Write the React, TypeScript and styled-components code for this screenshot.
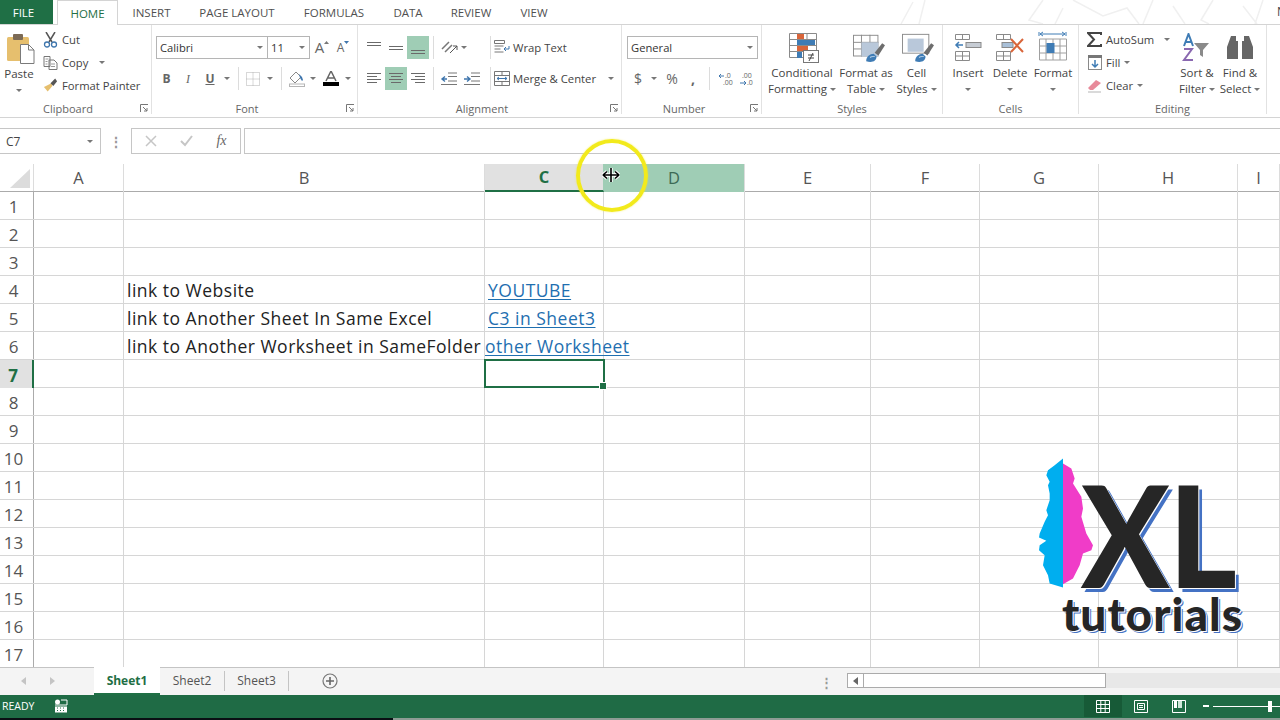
import styled, { createGlobalStyle } from "styled-components";

const GlobalStyle = createGlobalStyle`
	html, body {
		margin: 0;
		padding: 0;
		background: #fff;
		overflow: hidden;
	}
	* {
		box-sizing: border-box;
	}
`;

const Page = styled.div`
	position: relative;
	width: 1280px;
	height: 720px;
	overflow: hidden;
	background: #fff;
	display: flex;
	flex-direction: column;
	font-family: "Open Sans", "Noto Sans", sans-serif;
	color: #444;
`;

const TabBar = styled.div`
	display: flex;
	height: 25px;
	border-bottom: 1px solid #d4d4d4;
	flex: none;
`;

const FileTab = styled.div`
	width: 53px;
	height: 24px;
	background: #1f6f45;
	color: #fff;
	font-size: 11.5px;
	display: flex;
	align-items: center;
	justify-content: center;
	margin-right: 4px;
	padding-right: 6px;
`;

const Tab = styled.div<{ $w: number; $active?: boolean }>`
	width: ${(p) => p.$w}px;
	height: ${(p) => (p.$active ? 25 : 24)}px;
	display: flex;
	align-items: center;
	justify-content: center;
	font-size: 11.5px;
	background: #fff;
	color: ${(p) => (p.$active ? "#1f6f45" : "#505050")};
	border: ${(p) => (p.$active ? "1px solid #d4d4d4" : "none")};
	border-bottom: none;
	flex: none;
	white-space: nowrap;
`;

const Doodle = styled.svg`
	flex: 1;
	height: 24px;
`;

const SignIn = styled.div`
	width: 3px;
	overflow: hidden;
	font-size: 12px;
	line-height: 24px;
	color: #444;
`;

const Ribbon = styled.div`
	display: flex;
	height: 93px;
	flex: none;
	border-bottom: 1px solid #d4d4d4;
`;

const Group = styled.div<{ $w: number; $last?: boolean }>`
	width: ${(p) => p.$w}px;
	height: 89px;
	flex: none;
	display: flex;
	flex-direction: column;
	border-right: ${(p) => (p.$last ? "none" : "1px solid #e2e2e2")};
`;

const GroupBody = styled.div`
	height: 75px;
	display: flex;
	flex: none;
`;

const GroupFooter = styled.div`
	height: 17px;
	padding-top: 1px;
	display: flex;
	align-items: center;
	font-size: 11px;
	color: #666;
`;

const GroupLabel = styled.div`
	flex: 1;
	text-align: center;
`;

const Launcher = styled.svg`
	width: 9px;
	height: 9px;
	margin: 0 2px 0 4px;
`;

const PasteColumn = styled.div`
	width: 38px;
	margin-right: 5px;
	display: flex;
	flex-direction: column;
	align-items: center;
	padding-top: 8px;
	font-size: 11.5px;
	line-height: 16px;
	flex: none;
`;

const PasteIcon = styled.svg`
	margin-left: 4px;
`;

const SmallColumn = styled.div<{ $w: number; $pad?: number }>`
	width: ${(p) => p.$w}px;
	padding-left: ${(p) => p.$pad ?? 0}px;
	padding-top: 3px;
	display: flex;
	flex-direction: column;
	flex: none;
`;

const SmallButton = styled.div`
	height: 23px;
	display: flex;
	align-items: center;
	font-size: 11.25px;
	white-space: nowrap;
	gap: 4px;
`;

const IconBox = styled.span`
	width: 15px;
	height: 17px;
	flex: none;
	display: flex;
	align-items: center;
	justify-content: center;
`;

const Stack = styled.div<{ $pad: number }>`
	padding: 11px 0 0 ${(p) => p.$pad}px;
	display: flex;
	flex-direction: column;
	gap: 8px;
	flex: 1;
`;

const ToolRow = styled.div`
	height: 23px;
	display: flex;
	align-items: center;
`;

const Slot = styled.div<{ $w: number; $on?: boolean }>`
	width: ${(p) => p.$w}px;
	height: 23px;
	flex: none;
	display: flex;
	align-items: center;
	justify-content: center;
	font-size: 12px;
	background: ${(p) => (p.$on ? "#9fcdb5" : "transparent")};
`;

const Glyph = styled.span<{ $bold?: boolean; $italic?: boolean; $under?: boolean; $size?: number; $serif?: boolean }>`
	font-family: ${(p) => (p.$serif ? '"Liberation Serif", serif' : '"Open Sans", sans-serif')};
	font-size: ${(p) => p.$size ?? 12}px;
	font-weight: ${(p) => (p.$bold ? 700 : 400)};
	font-style: ${(p) => (p.$italic ? "italic" : "normal")};
	text-decoration: ${(p) => (p.$under ? "underline" : "none")};
	color: #666;
	line-height: 1;
`;

const VSep = styled.div`
	width: 1px;
	height: 23px;
	background: #dcdcdc;
`;

const Combo = styled.div<{ $w: number }>`
	width: ${(p) => p.$w}px;
	height: 23px;
	flex: none;
	border: 1px solid #b5b5b5;
	display: flex;
	align-items: center;
	justify-content: space-between;
	padding: 0 4px 0 3px;
	font-size: 11.2px;
	color: #333;
	& + & {
		border-left: 1px solid #b5b5b5;
		margin-left: -1px;
	}
`;

const Caret = styled.span<{ $gap?: number }>`
	display: inline-block;
	width: 0;
	height: 0;
	flex: none;
	margin-left: ${(p) => p.$gap ?? 0}px;
	border-left: 3px solid transparent;
	border-right: 3px solid transparent;
	border-top: 3px solid #777;
`;

const WideButton = styled.div`
	display: flex;
	align-items: center;
	gap: 3px;
	font-size: 11.3px;
	white-space: nowrap;
	height: 23px;
`;

const BigButton = styled.div<{ $w: number }>`
	width: ${(p) => p.$w}px;
	flex: none;
	padding-top: 8px;
	display: flex;
	flex-direction: column;
	align-items: center;
	font-size: 11.5px;
	line-height: 16px;
	white-space: nowrap;
`;

const BigIcon = styled.div<{ $shift?: number }>`
	height: 32px;
	margin-left: ${(p) => p.$shift ?? 0}px;
	display: flex;
	justify-content: center;
	align-items: flex-start;
`;

const CaretLine = styled.div`
	height: 16px;
	display: flex;
	align-items: center;
	justify-content: center;
	gap: 3px;
`;

const FormulaBar = styled.div`
	margin-top: 10px;
	height: 26px;
	display: flex;
	flex: none;
	font-size: 12px;
`;

const NameBox = styled.div`
	width: 101px;
	border: 1px solid #c6c6c6;
	border-left: none;
	display: flex;
	align-items: center;
	justify-content: space-between;
	padding: 0 7px 0 6px;
	color: #444;
`;

const Dots = styled.div`
	width: 30px;
	display: flex;
	align-items: center;
	justify-content: center;
	color: #999;
	font-size: 14px;
	font-weight: 700;
`;

const FnBox = styled.div`
	width: 110px;
	border: 1px solid #c6c6c6;
	display: flex;
	align-items: center;
	justify-content: space-around;
	padding: 0 2px;
`;

const FormulaInput = styled.div`
	flex: 1;
	margin-left: 3px;
	border: 1px solid #c6c6c6;
	border-right: none;
`;

const Sheet = styled.div`
	margin-top: 10px;
	flex: 1;
	display: flex;
	flex-direction: column;
	overflow: hidden;
	font-size: 17px;
`;

const HeaderRow = styled.div`
	height: 28px;
	flex: none;
	display: flex;
	border-bottom: 1px solid #ababab;
`;

const Corner = styled.div`
	width: 34px;
	flex: none;
	display: flex;
	align-items: flex-end;
	justify-content: flex-end;
	padding: 0 3px 3px 0;
	border-right: 1px solid #dcdcdc;
`;

const ColumnHead = styled.div<{ $w?: number; $state?: "selected" | "hover" }>`
	${(p) => (p.$w ? `width: ${p.$w}px; flex: none;` : "flex: 1;")}
	display: flex;
	align-items: center;
	justify-content: center;
	padding-bottom: 2px;
	font-size: 16.5px;
	border-right: 1px solid ${(p) => (p.$state === "selected" ? "#9fcdb5" : "#dcdcdc")};
	height: 28px;
	color: ${(p) => (p.$state === "selected" ? "#1f6f45" : p.$state === "hover" ? "#3c6a55" : "#555")};
	font-weight: ${(p) => (p.$state === "selected" ? 700 : 400)};
	background: ${(p) => (p.$state === "selected" ? "#e1e1e1" : p.$state === "hover" ? "#9fcdb5" : "transparent")};
	border-bottom: ${(p) => (p.$state === "selected" ? "2px solid #1f6f45" : "none")};
`;

const Row = styled.div`
	height: 28px;
	flex: none;
	display: flex;
	border-bottom: 1px solid #d6d6d6;
`;

const RowHead = styled.div<{ $selected?: boolean }>`
	width: 34px;
	flex: none;
	padding: 2px 6px 0 0;
	display: flex;
	align-items: center;
	justify-content: center;
	font-size: 17px;
	height: ${(p) => (p.$selected ? "28px" : "auto")};
	color: ${(p) => (p.$selected ? "#1f6f45" : "#555")};
	font-weight: ${(p) => (p.$selected ? 700 : 400)};
	background: ${(p) => (p.$selected ? "#e1e1e1" : "transparent")};
	border-right: ${(p) => (p.$selected ? "2px solid #1f6f45" : "1px solid #ababab")};
`;

const Cell = styled.div<{ $w?: number; $flush?: boolean }>`
	${(p) => (p.$w ? `width: ${p.$w}px; flex: none;` : "flex: 1;")}
	position: relative;
	border-right: 1px solid #d6d6d6;
	padding-left: ${(p) => (p.$flush ? 0 : 3)}px;
	display: flex;
	align-items: center;
	white-space: nowrap;
	color: #222;
	font-size: 17.5px;
	letter-spacing: 0.5px;
`;

const LinkText = styled.span`
	color: #1f6fb0;
	text-decoration: underline;
	text-underline-offset: 2px;
	text-decoration-thickness: 1px;
	position: relative;
	z-index: 1;
`;

const Selection = styled.div`
	position: absolute;
	left: -1px;
	top: -1px;
	width: 121px;
	height: 29px;
	border: 2px solid #1f6f45;
	z-index: 2;
	&::after {
		content: "";
		position: absolute;
		right: -4px;
		bottom: -4px;
		width: 6px;
		height: 6px;
		background: #1f6f45;
		border: 1px solid #fff;
	}
`;

const SheetTabs = styled.div`
	height: 28px;
	flex: none;
	display: flex;
	align-items: stretch;
	background: #f4f4f4;
	margin-top: -1px;
	border-top: 1px solid #c4c4c4;
	z-index: 3;
	font-size: 12px;
`;

const NavArrows = styled.div`
	width: 94px;
	display: flex;
	align-items: center;
	gap: 24px;
	padding: 0 0 2px 21px;
`;

const NavArrow = styled.span<{ $right?: boolean }>`
	width: 0;
	height: 0;
	border-top: 4px solid transparent;
	border-bottom: 4px solid transparent;
	${(p) => (p.$right ? "border-left: 5px solid #c4c4c4;" : "border-right: 5px solid #c4c4c4;")}
`;

const SheetTab = styled.div<{ $w: number; $active?: boolean }>`
	width: ${(p) => p.$w}px;
	margin-top: ${(p) => (p.$active ? -1 : 0)}px;
	padding-bottom: ${(p) => (p.$active ? 0 : 2)}px;
	display: flex;
	align-items: center;
	justify-content: center;
	background: ${(p) => (p.$active ? "#fff" : "transparent")};
	color: ${(p) => (p.$active ? "#1f6f45" : "#555")};
	font-weight: ${(p) => (p.$active ? 700 : 400)};
	border-bottom: ${(p) => (p.$active ? "2px solid #1f6f45" : "none")};
`;

const TabDivider = styled.div`
	width: 1px;
	height: 20px;
	margin-top: 3px;
	background: #c4c4c4;
`;

const AddSheet = styled.div`
	width: 82px;
	padding-bottom: 2px;
	display: flex;
	align-items: center;
	justify-content: center;
`;

const TabsGap = styled.div`
	width: 471px;
	display: flex;
	align-items: center;
	justify-content: flex-end;
	padding-right: 9px;
	color: #999;
	font-size: 13px;
	font-weight: 700;
`;

const ScrollTrack = styled.div`
	flex: 1;
	margin: 5px 0 7px 5px;
	background: #e8e8e8;
	display: flex;
	height: 15px;
`;

const ScrollArrow = styled.div`
	width: 16px;
	background: #fff;
	border: 1px solid #ababab;
	border-right: none;
	display: flex;
	align-items: center;
	justify-content: center;
`;

const ScrollThumb = styled.div`
	width: 243px;
	background: #fff;
	border: 1px solid #ababab;
`;

const StatusBar = styled.div`
	height: 23px;
	flex: none;
	background: #1f6b45;
	color: #fff;
	font-size: 10.5px;
	display: flex;
	align-items: center;
	padding: 0 0 1px 2px;
`;

const StatusIcon = styled.div`
	margin-left: 20px;
	display: flex;
	align-items: center;
`;

const ViewButtons = styled.div`
	margin-left: auto;
	height: 23px;
	display: flex;
	align-items: center;
`;

const ViewButton = styled.div<{ $on?: boolean }>`
	width: 38px;
	height: 22px;
	display: flex;
	align-items: center;
	justify-content: center;
	background: ${(p) => (p.$on ? "#175a37" : "transparent")};
`;

const ZoomSlider = styled.div`
	width: 86px;
	padding-left: 5px;
	margin-right: -4px;
	display: flex;
	align-items: center;
`;

const ZoomMinus = styled.div`
	width: 6px;
	height: 2px;
	background: #fff;
	margin-right: 4px;
`;

const ZoomLine = styled.div`
	flex: 1;
	height: 1px;
	background: #fff;
	display: flex;
	justify-content: flex-end;
	align-items: center;
	padding-right: 12px;
`;

const ZoomThumb = styled.div`
	width: 4px;
	height: 11px;
	background: #fff;
`;

const BottomEdge = styled.div`
	height: 2px;
	flex: none;
	background: linear-gradient(to right, #0a0f14 0, #0a0f14 393px, #8d9c94 393px, #8d9c94 100%);
`;

const Spotlight = styled.div`
	position: absolute;
	left: 576px;
	top: 139px;
	width: 72px;
	height: 73px;
	border-radius: 50%;
	border: 4px solid #f2ea1c;
	box-shadow: 0 0 2px rgba(242, 234, 28, 0.6);
	z-index: 5;
`;

const ResizeCursor = styled.svg`
	position: absolute;
	left: 22px;
	top: 24px;
	width: 18px;
	height: 16px;
`;

const Logo = styled.div`
	position: absolute;
	left: 1039px;
	top: 458px;
	width: 215px;
	z-index: 4;
	display: flex;
	flex-direction: column;
`;

const LogoTop = styled.div`
	display: flex;
	height: 134px;
`;

const LogoFace = styled.svg`
	width: 54px;
	height: 130px;
	flex: none;
`;

const LogoXL = styled.div`
	font-family: Lato, sans-serif;
	font-weight: 900;
	font-size: 142px;
	line-height: 104px;
	height: 104px;
	margin: 23px 0 0 -12px;
	color: #262626;
	letter-spacing: -1px;
	transform: scaleX(0.92);
	transform-origin: left center;
	text-shadow: 1px 1px 0 #fff, 4px 4px 0 #4472c4;
`;

const LogoWord = styled.div`
	font-family: Lato, sans-serif;
	font-weight: 900;
	font-size: 46px;
	line-height: 44px;
	margin-left: 23px;
	letter-spacing: 1px;
	color: #262626;
	text-shadow: 1px 1px 0 #fff, 2px 2px 0 #4472c4;
`;

const columns = [
	{ name: "A", w: 90 },
	{ name: "B", w: 361 },
	{ name: "C", w: 119, state: "selected" as const },
	{ name: "D", w: 141, state: "hover" as const },
	{ name: "E", w: 126 },
	{ name: "F", w: 109 },
	{ name: "G", w: 119 },
	{ name: "H", w: 139 },
	{ name: "I" },
];

const cellText: Record<number, { b: string; c: string; flush?: boolean }> = {
	4: { b: "link to Website", c: "YOUTUBE" },
	5: { b: "link to Another Sheet In Same Excel", c: "C3 in Sheet3" },
	6: { b: "link to Another Worksheet in SameFolder", c: "other Worksheet", flush: true },
};

const rows = Array.from({ length: 17 }, (_, i) => i + 1);

function Lines({ align, v = 0 }: { align: "l" | "c" | "r"; v?: number }) {
	const w = [14, 10, 14, 10];
	return (
		<svg width="16" height="17" viewBox="0 0 16 17">
			{[0, 1, 2, 3].slice(0, v ? 2 : 4).map((i) => {
				const len = v ? 14 : w[i];
				const x = v ? 1 : align === "l" ? 1 : align === "c" ? 8 - len / 2 : 15 - len;
				const y = v ? v + i * 3 : 3 + i * 3;
				return <rect key={i} x={x} y={y} width={len} height="1" fill="#6a6a6a" />;
			})}
		</svg>
	);
}

function Indent({ flip }: { flip?: boolean }) {
	return (
		<svg width="18" height="14" viewBox="0 0 18 14">
			<path d="M8 1h9M8 4.500h9M8 9h9M1 12.500h16" stroke="#777" fill="none" />
			<path d={flip ? "M1 7h5M4 4.500l3 2.500-3 2.500" : "M2 7h5M5 4.500l-3 2.500 3 2.500"} stroke="#3f76ad" strokeWidth="1.400" fill="none" />
		</svg>
	);
}

function GridIcon({ fill }: { fill?: string }) {
	return (
		<g stroke="#8a8a8a" fill={fill ?? "#fff"}>
			<rect x="0.500" y="0.500" width="26" height="22" />
			<path d="M0 8h27M0 15h27M9 0v23M18 0v23" fill="none" />
		</g>
	);
}

function Brush() {
	return (
		<g>
			<path d="M14 29c0-5 4-8 8-8l3 3c0 5-5 7-11 5z" fill="#3f7cb5" />
			<path d="M23 20l8-10 3 2-7 11z" fill="#6d6d6d" />
			<path d="M18 25c2-1 3-1 5-1" stroke="#cfe0f0" fill="none" />
		</g>
	);
}

export default function App() {
	return (
		<Page>
			<GlobalStyle />
			<TabBar>
				<FileTab>FILE</FileTab>
				<Tab $w={61} $active>HOME</Tab>
				<Tab $w={67}>INSERT</Tab>
				<Tab $w={104}>PAGE LAYOUT</Tab>
				<Tab $w={90}>FORMULAS</Tab>
				<Tab $w={58}>DATA</Tab>
				<Tab $w={68}>REVIEW</Tab>
				<Tab $w={58}>VIEW</Tab>
				<Doodle viewBox="0 0 714 24" preserveAspectRatio="none">
					<g stroke="#f0f0f0" fill="none" strokeWidth="1.500">
						<path d="M350 2l-12 22M362 0l-6 24" />
						<path d="M480 0l-14 20 14 4M500 8l-8 16M510 0l30 16 24-8 12 16" />
						<path d="M590 0l-10 24M610 6l12 18M650 0l-12 20 8 4" />
						<path d="M700 0l-8 24M680 6l14 18" />
					</g>
				</Doodle>
				<SignIn>N</SignIn>
			</TabBar>

			<Ribbon>
				<Group $w={152}>
					<GroupBody>
						<PasteColumn>
							<PasteIcon width="30" height="32" viewBox="0 0 30 32">
								<rect x="1" y="4" width="22" height="24" rx="1.500" fill="#e6bf6e" />
								<rect x="7" y="1" width="10" height="6" rx="1" fill="#7b6a55" />
								<path d="M14.500 11.500h8l5.500 5.500v13.500h-13.500z" fill="#fff" stroke="#7a7a7a" />
								<path d="M22.500 11.500v5.500h5.500" fill="none" stroke="#7a7a7a" />
							</PasteIcon>
							<CaretLine style={{ marginTop: 1 }}>Paste</CaretLine>
							<CaretLine><Caret /></CaretLine>
						</PasteColumn>
						<SmallColumn $w={106}>
							<SmallButton>
								<IconBox>
									<svg width="15" height="16" viewBox="0 0 15 16">
										<path d="M3 0l6 10M12 0L6 10" stroke="#555" strokeWidth="1.500" fill="none" />
										<circle cx="4" cy="12.500" r="2.500" fill="none" stroke="#3f76ad" strokeWidth="1.300" />
										<circle cx="11" cy="12.500" r="2.500" fill="none" stroke="#3f76ad" strokeWidth="1.300" />
									</svg>
								</IconBox>
								Cut
							</SmallButton>
							<SmallButton>
								<IconBox>
									<svg width="15" height="14" viewBox="0 0 15 14">
										<path d="M1 .5h6v10H1zM6 4h5l3 3v6.500H6z" fill="#fff" stroke="#777" />
										<path d="M2.500 3h3M2.500 5.500h2M2.500 8h2M8 8h4M8 10.500h4" stroke="#999" />
									</svg>
								</IconBox>
								Copy
								<Caret $gap={7} />
							</SmallButton>
							<SmallButton>
								<IconBox>
									<svg width="16" height="15" viewBox="0 0 16 15">
										<path d="M9 5l-8 4 4 5 5-6z" fill="#e6bf6e" />
										<path d="M8 5l3 3 4-5-2-3z" fill="#555" />
									</svg>
								</IconBox>
								Format Painter
							</SmallButton>
						</SmallColumn>
					</GroupBody>
					<GroupFooter>
						<GroupLabel>Clipboard</GroupLabel>
						<Launcher viewBox="0 0 9 9"><path d="M.5 8V.5H8M3 3l4 4M7 4v3H4" fill="none" stroke="#777" /></Launcher>
					</GroupFooter>
				</Group>

				<Group $w={206}>
					<GroupBody>
						<Stack $pad={4}>
							<ToolRow>
								<Combo $w={112}>Calibri<Caret /></Combo>
								<Combo $w={43}>11<Caret /></Combo>
								<Slot $w={22} style={{ marginLeft: 1 }}>
									<Glyph $size={15}>A</Glyph>
									<svg width="5" height="4" style={{ marginBottom: 10 }}><path d="M0 3l2.500-3 2.500 3z" fill="#777" /></svg>
								</Slot>
								<Slot $w={20}>
									<Glyph $size={12}>A</Glyph>
									<svg width="5" height="4" style={{ marginBottom: 10 }}><path d="M0 0l2.500 3 2.500-3z" fill="#3f76ad" /></svg>
								</Slot>
							</ToolRow>
							<ToolRow>
								<Slot $w={21}><Glyph $bold $size={12}>B</Glyph></Slot>
								<Slot $w={22}><Glyph $italic $size={12} $serif>I</Glyph></Slot>
								<Slot $w={22}><Glyph $under $bold $size={12}>U</Glyph></Slot>
								<Slot $w={12}><Caret /></Slot>
								<Slot $w={10}><VSep /></Slot>
								<Slot $w={20}>
									<svg width="14" height="14" viewBox="0 0 14 14"><path d="M.5.5h13v13H.5zM.5 7h13M7 .5v13" fill="none" stroke="#b0b0b0" strokeDasharray="1 1" /></svg>
								</Slot>
								<Slot $w={14}><Caret /></Slot>
								<Slot $w={8}><VSep /></Slot>
								<Slot $w={24}>
									<svg width="16" height="16" viewBox="0 0 16 16">
										<path d="M7 1L1 7l5 5 6-6z" fill="#fff" stroke="#888" />
										<path d="M10 3l3 3 1 3-1 1-2-3z" fill="#3f76ad" />
										<rect x="0.500" y="13" width="15" height="2.500" fill="#fff" stroke="#b5b5b5" />
									</svg>
								</Slot>
								<Slot $w={8}><Caret /></Slot>
								<Slot $w={28}>
									<svg width="16" height="15" viewBox="0 0 16 15">
										<path d="M3 10L8 0l5 10M5 7h6" stroke="#666" strokeWidth="1.500" fill="none" />
										<rect y="11" width="16" height="4" fill="#000" />
									</svg>
								</Slot>
								<Slot $w={6}><Caret /></Slot>
							</ToolRow>
						</Stack>
					</GroupBody>
					<GroupFooter>
						<GroupLabel>Font</GroupLabel>
						<Launcher viewBox="0 0 9 9"><path d="M.5 8V.5H8M3 3l4 4M7 4v3H4" fill="none" stroke="#777" /></Launcher>
					</GroupFooter>
				</Group>

				<Group $w={264}>
					<GroupBody>
						<Stack $pad={5}>
							<ToolRow>
								<Slot $w={22}><Lines align="l" v={3} /></Slot>
								<Slot $w={22}><Lines align="l" v={7} /></Slot>
								<Slot $w={22} $on><Lines align="l" v={11} /></Slot>
								<Slot $w={8}><VSep /></Slot>
								<Slot $w={24}>
									<svg width="18" height="16" viewBox="0 0 18 16">
										<path d="M2 9l7-7M5 12l7-7" stroke="#777" strokeWidth="1.500" fill="none" />
										<path d="M10 13l7-7M17 10V6h-4" stroke="#555" fill="none" />
									</svg>
								</Slot>
								<Slot $w={6}><Caret /></Slot>
								<Slot $w={19} />
								<Slot $w={8}><VSep /></Slot>
								<WideButton>
									<svg width="16" height="15" viewBox="0 0 16 15">
										<path d="M.5.5h10v3H.5zM.5 6h9M.5 9h6M.5 12h9" fill="none" stroke="#777" />
										<path d="M15 6v3h-5M12 7l-2 2 2 2" fill="none" stroke="#3f76ad" />
									</svg>
									Wrap Text
								</WideButton>
							</ToolRow>
							<ToolRow>
								<Slot $w={22}><Lines align="l" /></Slot>
								<Slot $w={22} $on><Lines align="c" /></Slot>
								<Slot $w={22}><Lines align="r" /></Slot>
								<Slot $w={8}><VSep /></Slot>
								<Slot $w={24}><Indent /></Slot>
								<Slot $w={22}><Indent flip /></Slot>
								<Slot $w={3} />
								<Slot $w={8}><VSep /></Slot>
								<WideButton>
									<svg width="16" height="15" viewBox="0 0 16 15">
										<path d="M.5.5h15v14H.5zM.5 4.500h15M.5 10.500h15M8 .5v4M8 10.500v4" fill="none" stroke="#777" />
										<path d="M3 7.500h10M5 6l-2 1.500L5 9M11 6l2 1.500L11 9" fill="none" stroke="#3f76ad" />
									</svg>
									Merge &amp; Center
									<Caret $gap={9} />
								</WideButton>
							</ToolRow>
						</Stack>
					</GroupBody>
					<GroupFooter>
						<GroupLabel>Alignment</GroupLabel>
						<Launcher viewBox="0 0 9 9"><path d="M.5 8V.5H8M3 3l4 4M7 4v3H4" fill="none" stroke="#777" /></Launcher>
					</GroupFooter>
				</Group>

				<Group $w={140}>
					<GroupBody>
						<Stack $pad={5}>
							<ToolRow>
								<Combo $w={131}>General<Caret /></Combo>
							</ToolRow>
							<ToolRow>
								<Slot $w={22}><Glyph $size={14}>$</Glyph></Slot>
								<Slot $w={10}><Caret /></Slot>
								<Slot $w={26}><Glyph $size={14}>%</Glyph></Slot>
								<Slot $w={16}><Glyph $bold $size={14}>,</Glyph></Slot>
								<Slot $w={16}><VSep /></Slot>
								<Slot $w={18}>
									<svg width="16" height="14" viewBox="0 0 16 14">
										<text x="7" y="6" fontSize="7" fill="#666" fontFamily="Open Sans, sans-serif">.0</text>
										<text x="5" y="13" fontSize="7" fill="#666" fontFamily="Open Sans, sans-serif">.00</text>
										<path d="M6 4H1M3 2L1 4l2 2" fill="none" stroke="#3f76ad" />
									</svg>
								</Slot>
								<Slot $w={22}>
									<svg width="16" height="14" viewBox="0 0 16 14">
										<text x="4" y="6" fontSize="7" fill="#666" fontFamily="Open Sans, sans-serif">.00</text>
										<text x="9" y="13" fontSize="7" fill="#666" fontFamily="Open Sans, sans-serif">.0</text>
										<path d="M2 11h6M6 9l2 2-2 2" fill="none" stroke="#3f76ad" />
									</svg>
								</Slot>
							</ToolRow>
						</Stack>
					</GroupBody>
					<GroupFooter>
						<GroupLabel>Number</GroupLabel>
						<Launcher viewBox="0 0 9 9"><path d="M.5 8V.5H8M3 3l4 4M7 4v3H4" fill="none" stroke="#777" /></Launcher>
					</GroupFooter>
				</Group>

				<Group $w={181}>
					<GroupBody>
						<BigButton $w={80}>
							<BigIcon $shift={3}>
								<svg width="30" height="30" viewBox="0 0 30 30">
									<path d="M.5.5h27v24H.5zM.5 6.500h27M.5 12.500h27M.5 18.500h27M9 .5v24M18 .5v24" fill="#fff" stroke="#8a8a8a" />
									<rect x="8" y="1" width="7" height="5" fill="#d9653a" />
									<rect x="8" y="7" width="18" height="5" fill="#3f7cb5" />
									<rect x="8" y="13" width="11" height="5" fill="#d9653a" />
									<rect x="8" y="19" width="5" height="6" fill="#3f7cb5" />
									<rect x="14.500" y="17.500" width="15" height="12" fill="#fff" stroke="#777" />
									<path d="M19 22h6M19 25h6M24 20l-4 8" stroke="#444" fill="none" />
								</svg>
							</BigIcon>
							Conditional
							<CaretLine>Formatting <Caret /></CaretLine>
						</BigButton>
						<BigButton $w={48}>
							<BigIcon $shift={5}>
								<svg width="32" height="30" viewBox="0 0 34 30">
									<g transform="translate(0 1)"><GridIcon /></g>
									<rect x="9" y="9" width="18" height="15" fill="#b9c8da" />
									<Brush />
								</svg>
							</BigIcon>
							Format as
							<CaretLine>Table <Caret /></CaretLine>
						</BigButton>
						<BigButton $w={53}>
							<BigIcon $shift={3}>
								<svg width="32" height="30" viewBox="0 0 34 30">
									<rect x="0.500" y="0.500" width="28" height="20" fill="#fff" stroke="#8a8a8a" />
									<rect x="6" y="5" width="17" height="14" fill="#b9c8da" />
									<Brush />
								</svg>
							</BigIcon>
							Cell
							<CaretLine>Styles <Caret /></CaretLine>
						</BigButton>
					</GroupBody>
					<GroupFooter>
						<GroupLabel>Styles</GroupLabel>
					</GroupFooter>
				</Group>

				<Group $w={136}>
					<GroupBody>
						<BigButton $w={50}>
							<BigIcon>
								<svg width="28" height="30" viewBox="0 0 28 30">
									<path d="M1.500 1.500h14v5h-14zM8.500 1.500v5M1.500 18.500h14v9h-14zM1.500 23h14M8.500 18.500v9" fill="#fff" stroke="#8a8a8a" />
									<rect x="12" y="9.500" width="15" height="5" fill="#c6ccd4" stroke="#8a8a8a" />
									<path d="M9 12H2M5 9l-3 3 3 3" fill="none" stroke="#3f7cb5" strokeWidth="1.500" />
								</svg>
							</BigIcon>
							Insert
							<CaretLine><Caret /></CaretLine>
						</BigButton>
						<BigButton $w={34}>
							<BigIcon>
								<svg width="30" height="30" viewBox="0 0 30 30">
									<path d="M1.500 1.500h14v5h-14zM8.500 1.500v5M1.500 18.500h14v9h-14zM1.500 23h14M8.500 18.500v9" fill="#fff" stroke="#8a8a8a" />
									<rect x="7" y="9.500" width="11" height="5" fill="#a9c0d8" stroke="#8a8a8a" />
									<path d="M16 6l12 13M28 6L16 19" stroke="#d9653a" strokeWidth="2" />
								</svg>
							</BigIcon>
							Delete
							<CaretLine><Caret /></CaretLine>
						</BigButton>
						<BigButton $w={52}>
							<BigIcon>
								<svg width="30" height="31" viewBox="0 0 30 31" style={{ marginTop: -2 }}>
									<path d="M1 1v4M28 1v4M2 3h25M2 3l3-2M2 3l3 2M27 3l-3-2M27 3l-3 2" stroke="#3f7cb5" fill="none" />
									<path d="M1.500 8h27v21h-27zM1.500 15h27M1.500 22h27M8 8v21M15 8v21M22 8v21" fill="#fff" stroke="#a0a0a0" />
									<rect x="8.500" y="12" width="8" height="10" fill="#3f7cb5" />
								</svg>
							</BigIcon>
							Format
							<CaretLine><Caret /></CaretLine>
						</BigButton>
					</GroupBody>
					<GroupFooter>
						<GroupLabel>Cells</GroupLabel>
					</GroupFooter>
				</Group>

				<Group $w={188}>
					<GroupBody>
						<SmallColumn $w={96} $pad={8}>
							<SmallButton>
								<IconBox>
									<svg width="15" height="15" viewBox="0 0 15 15"><path d="M14 3V1H1l6 6.500L1 14h13v-2" fill="none" stroke="#444" strokeWidth="2" /></svg>
								</IconBox>
								AutoSum
								<Caret $gap={6} />
							</SmallButton>
							<SmallButton>
								<IconBox>
									<svg width="14" height="15" viewBox="0 0 14 15">
										<rect x="0.500" y="0.500" width="13" height="14" fill="#fff" stroke="#8a8a8a" />
										<rect width="14" height="3" fill="#777" />
										<path d="M7 5v7M4 9l3 3 3-3" fill="none" stroke="#3f7cb5" strokeWidth="1.500" />
									</svg>
								</IconBox>
								Fill
								<Caret />
							</SmallButton>
							<SmallButton>
								<IconBox>
									<svg width="15" height="15" viewBox="0 0 15 15">
										<path d="M1 10l8-8 5 3-8 7H3z" fill="#e88a9a" />
										<path d="M1 14h13" stroke="#b5b5b5" />
									</svg>
								</IconBox>
								Clear
								<Caret />
							</SmallButton>
						</SmallColumn>
						<BigButton $w={44}>
							<BigIcon>
								<svg width="30" height="30" viewBox="0 0 30 30">
									<path d="M2 13L6.500 1 11 13M3.500 9h6" fill="none" stroke="#3f7cb5" strokeWidth="2" />
									<path d="M2 16h8L2 27h9" fill="none" stroke="#8a68b0" strokeWidth="2" />
									<path d="M12 10h15l-6 7v7l-3-2v-5z" fill="#8a8a8a" />
								</svg>
							</BigIcon>
							Sort &amp;
							<CaretLine>Filter <Caret /></CaretLine>
						</BigButton>
						<BigButton $w={42}>
							<BigIcon>
								<svg width="28" height="28" viewBox="0 0 28 28">
									<path d="M5 3h5v5h2v18H1V14zM23 3h-5v5h-2v18h11V14z" fill="#666" />
								</svg>
							</BigIcon>
							Find &amp;
							<CaretLine>Select <Caret /></CaretLine>
						</BigButton>
					</GroupBody>
					<GroupFooter>
						<GroupLabel>Editing</GroupLabel>
					</GroupFooter>
				</Group>
			</Ribbon>

			<FormulaBar>
				<NameBox>C7<Caret /></NameBox>
				<Dots>⋮</Dots>
				<FnBox>
					<svg width="12" height="12" viewBox="0 0 12 12"><path d="M1 1l10 10M11 1L1 11" stroke="#c6c6c6" strokeWidth="1.500" /></svg>
					<svg width="13" height="12" viewBox="0 0 13 12"><path d="M1 6l4 4 7-9" stroke="#c6c6c6" strokeWidth="2" fill="none" /></svg>
					<Glyph $italic $serif $size={14}>fx</Glyph>
				</FnBox>
				<FormulaInput />
			</FormulaBar>

			<Sheet>
				<HeaderRow>
					<Corner>
						<svg width="20" height="19" viewBox="0 0 20 19"><path d="M20 0v19H0z" fill="#dcdcdc" /></svg>
					</Corner>
					{columns.map((c) => (
						<ColumnHead key={c.name} $w={c.w} $state={c.state}>{c.name}</ColumnHead>
					))}
				</HeaderRow>
				{rows.map((r) => (
					<Row key={r}>
						<RowHead $selected={r === 7}>{r}</RowHead>
						{columns.map((c) => (
							<Cell key={c.name} $w={c.w} $flush={c.name === "C" && cellText[r]?.flush}>
								{c.name === "B" && cellText[r]?.b}
								{c.name === "C" && cellText[r] && <LinkText>{cellText[r].c}</LinkText>}
								{c.name === "C" && r === 7 && <Selection />}
							</Cell>
						))}
					</Row>
				))}
			</Sheet>

			<SheetTabs>
				<NavArrows>
					<NavArrow />
					<NavArrow $right />
				</NavArrows>
				<SheetTab $w={66} $active>Sheet1</SheetTab>
				<SheetTab $w={64}>Sheet2</SheetTab>
				<TabDivider />
				<SheetTab $w={63}>Sheet3</SheetTab>
				<TabDivider />
				<AddSheet>
					<svg width="16" height="16" viewBox="0 0 16 16">
						<circle cx="8" cy="8" r="7" fill="none" stroke="#777" strokeWidth="1.200" />
						<path d="M8 4v8M4 8h8" stroke="#666" strokeWidth="1.600" />
					</svg>
				</AddSheet>
				<TabsGap>⋮</TabsGap>
				<ScrollTrack>
					<ScrollArrow>
						<svg width="5" height="8" viewBox="0 0 5 8"><path d="M5 0v8L0 4z" fill="#666" /></svg>
					</ScrollArrow>
					<ScrollThumb />
				</ScrollTrack>
			</SheetTabs>

			<StatusBar>
				READY
				<StatusIcon>
					<svg width="14" height="14" viewBox="0 0 14 14">
						<circle cx="3.500" cy="3" r="2.500" fill="#fff" />
						<path d="M1 6h12V1H7" fill="none" stroke="#fff" />
						<path d="M1 7.500h12v6H1z" fill="#fff" />
						<path d="M3 9h1M6 9h1M9 9h1M3 11.500h1M6 11.500h1M9 11.500h1" stroke="#1f6b45" />
					</svg>
				</StatusIcon>
				<ViewButtons>
					<ViewButton $on>
						<svg width="14" height="13" viewBox="0 0 14 13"><path d="M.5.5h13v12H.5zM.5 4.500h13M.5 8.500h13M4.800.5v12M9.200.5v12" fill="none" stroke="#fff" /></svg>
					</ViewButton>
					<ViewButton>
						<svg width="14" height="13" viewBox="0 0 14 13"><path d="M.5.5h13v12H.5zM3.500 3.500h7v6h-7zM5 5.500h4M5 7.500h4" fill="none" stroke="#fff" /></svg>
					</ViewButton>
					<ViewButton>
						<svg width="14" height="13" viewBox="0 0 14 13">
							<path d="M.5.5h13v12H.5z" fill="none" stroke="#fff" />
							<rect x="2" y="1" width="3" height="7" fill="#fff" />
							<rect x="6" y="1" width="4" height="7" fill="#cfe6d9" />
						</svg>
					</ViewButton>
					<ZoomSlider>
						<ZoomMinus />
						<ZoomLine><ZoomThumb /></ZoomLine>
					</ZoomSlider>
				</ViewButtons>
			</StatusBar>
			<BottomEdge />

			<Spotlight>
				<ResizeCursor viewBox="0 0 18 16">
					<path d="M9 1v14M1 8h16M1 8l4-3.500M1 8l4 3.500M17 8l-4-3.500M17 8l-4 3.500" stroke="#fff" strokeWidth="3.500" fill="none" />
					<path d="M9 1v14M1 8h16M1 8l4-3.500M1 8l4 3.500M17 8l-4-3.500M17 8l-4 3.500" stroke="#000" strokeWidth="1.600" fill="none" />
				</ResizeCursor>
			</Spotlight>

			<Logo>
				<LogoTop>
					<LogoFace viewBox="58 25 162 387">
						<path d="M130 25l-25 20-20 15-5 15 10 20-5 10 5 25v20l-10 30 5 15-10 20-15 35-2 12 22 10-20 13-2 15 17 15-5 30 15 30 5 25 40 12z" fill="#00aeef" />
						<path d="M130 40l25 15 10 30-5 15 25 40 5 35-5 25 15 50 20 35-5 15-25 10-10 35-20 40-30 17z" fill="#f03cc8" />
					</LogoFace>
					<LogoXL>XL</LogoXL>
				</LogoTop>
				<LogoWord>tutorials</LogoWord>
			</Logo>
		</Page>
	);
}
